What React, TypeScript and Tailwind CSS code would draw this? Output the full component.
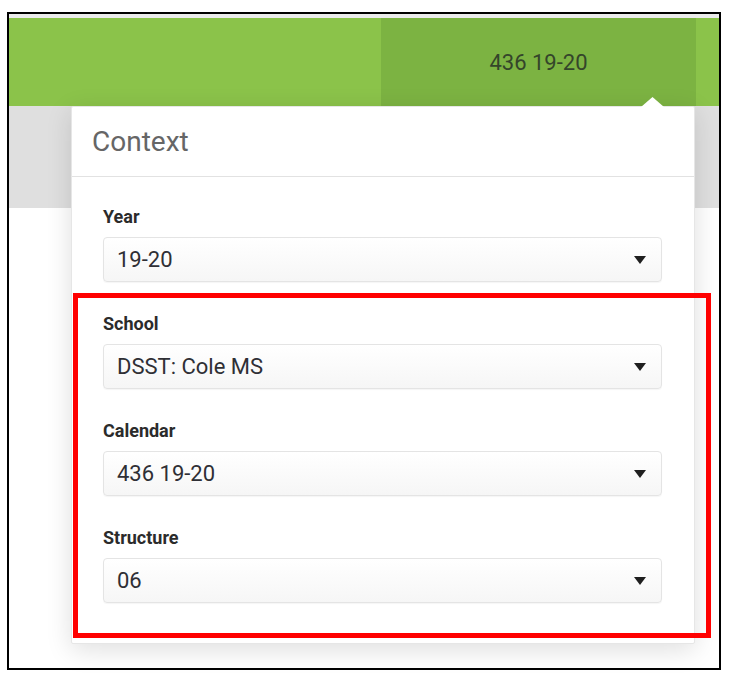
import React from 'react';

const fields = [
  { label: 'Year', value: '19-20' },
  { label: 'School', value: 'DSST: Cole MS' },
  { label: 'Calendar', value: '436 19-20' },
  { label: 'Structure', value: '06' },
];

const SelectBox = ({ label, value }: { label: string; value: string }) => (
  <div className="flex flex-col">
    <label className="text-[18px] leading-[22px] font-bold text-[#2b2b2b] mb-[9px]">{label}</label>
    <div className="h-[45px] flex items-center justify-between pl-[13px] pr-[15px] rounded-[4px] border border-[#e4e4e4] bg-gradient-to-b from-white to-[#f6f6f6] shadow-[0_1px_1px_rgba(0,0,0,0.04)]">
      <span className="text-[22px] text-[#2f2f35]">{value}</span>
      <svg width="12" height="8" viewBox="0 0 12 8">
        <polygon points="0,0 12,0 6,8" fill="#1f1f1f" />
      </svg>
    </div>
  </div>
);

export default function App() {
  return (
    <div className="relative min-h-screen bg-white pt-[12px] pl-[7px] font-['Roboto',sans-serif]">
      {/* Browser frame */}
      <div className="relative w-[714px] h-[658px] border-2 border-black flex flex-col">
        <div className="h-[4px] bg-[#ebebeb]" />

        {/* Green top bar */}
        <div className="h-[88px] flex">
          <div className="flex-1 bg-[#8bc34a]" />
          <div className="w-[315px] bg-[#7cb342] flex items-center justify-center">
            <span className="text-[22px] text-[#34452a]">436 19-20</span>
          </div>
          <div className="w-[23px] bg-[#8bc34a]" />
        </div>

        <div className="h-[102px] bg-[#dfdfdf]" />
        <div className="flex-1 bg-white" />

        {/* Context popover */}
        <div className="absolute left-[62px] top-[92px] w-[624px] bg-white border border-[#e6e6e6] rounded-[2px] shadow-[0_6px_26px_rgba(0,0,0,0.13)]">
          <svg className="absolute left-[569px] top-[-10px]" width="23" height="10" viewBox="0 0 23 10">
            <polygon points="0,10 11.5,0 23,10" fill="#ffffff" />
          </svg>
          <div className="px-5 pt-[18px] pb-[17px] border-b border-[#e2e2e2]">
            <h2 className="text-[28px] leading-[34px] text-[#666]">Context</h2>
          </div>
          <div className="pt-[29px] pl-[31px] pr-[32px] pb-[40px] flex flex-col gap-[31px]">
            {fields.map((f) => (
              <SelectBox key={f.label} label={f.label} value={f.value} />
            ))}
          </div>
        </div>
      </div>

      {/* Annotation highlight */}
      <div className="absolute left-[73px] top-[293px] w-[638px] h-[345px] border-[5px] border-[#ff0000]" />
    </div>
  );
}
